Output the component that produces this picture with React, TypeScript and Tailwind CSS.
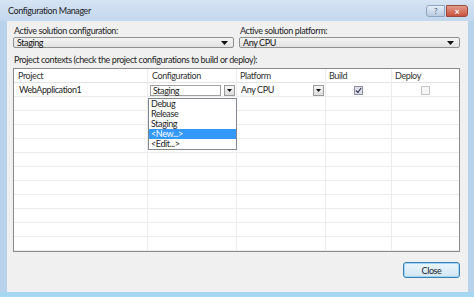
import React from "react";

const font = { fontFamily: 'Lato, "Open Sans", "DejaVu Sans", sans-serif' };

function Arrow() {
  return (
    <svg width="7" height="4" viewBox="0 0 7 4">
      <path d="M0 0h7L3.5 4z" fill="#111" />
    </svg>
  );
}

function Combo({ value }: { value: string }) {
  return (
    <div className="flex h-[15px] flex-1 items-center justify-between rounded-[2px] border border-[#8e8f8f] bg-gradient-to-b from-[#f4f4f4] to-[#e2e2e2] pl-[3px] pr-[5px]">
      <span className="text-[9px] leading-none text-[#111]">{value}</span>
      <Arrow />
    </div>
  );
}

function SmallDrop() {
  return (
    <div className="flex h-[11px] w-[11px] items-center justify-center border border-[#9a9a9a] bg-gradient-to-b from-[#f6f6f6] to-[#dcdcdc]">
      <svg width="5" height="3" viewBox="0 0 5 3">
        <path d="M0 0h5L2.5 3z" fill="#111" />
      </svg>
    </div>
  );
}

const cols = "grid grid-cols-[134px_89px_89px_66px_67px]";
const cell = "border-r border-[#ececec] last:border-r-0";

export default function App() {
  const rows = Array.from({ length: 11 });
  return (
    <div
      style={font}
      className="relative flex h-[297px] w-[474px] flex-col overflow-hidden bg-[#b9d2ec] tracking-[-0.4px] text-[#1e1e1e]"
    >
      {/* title bar */}
      <div className="flex h-[21px] items-center justify-between bg-gradient-to-b from-[#d6e4f3] to-[#c3d7ee] pl-[8px] pr-[6px]">
        <span className="text-[9px] text-[#1c1c1c]">Configuration Manager</span>
        <div className="flex gap-[1px] self-start pt-[5px]">
          <div className="flex h-[12px] w-[19px] items-center justify-center rounded-l-[3px] border border-[#8ea5c2] bg-gradient-to-b from-[#e6eef8] to-[#b9cbe2] text-[8px] leading-none text-[#4b5f7a]">
            ?
          </div>
          <div className="flex h-[12px] w-[22px] items-center justify-center rounded-r-[3px] border border-[#9b4a3e] bg-gradient-to-b from-[#e49a8a] to-[#c8503c] text-[9px] font-bold leading-none text-white">
            ×
          </div>
        </div>
      </div>

      {/* client area */}
      <div className="ml-[7px] mr-[6px] flex flex-1 flex-col bg-[#f0f0f0] pl-[6px] pr-[8px]">
        <div className="mt-[4px] flex gap-[5px]">
          <div className="flex flex-1 flex-col">
            <span className="h-[12px] pl-[1px] text-[9px] leading-[12px]">Active solution configuration:</span>
            <Combo value="Staging" />
          </div>
          <div className="flex flex-1 flex-col">
            <span className="h-[12px] pl-[1px] text-[9px] leading-[12px]">Active solution platform:</span>
            <Combo value="Any CPU" />
          </div>
        </div>

        <span className="mt-[6px] h-[12px] pl-[1px] text-[9px] leading-[12px]">
          Project contexts (check the project configurations to build or deploy):
        </span>

        <div className="relative mt-[2px] h-[184px] border border-[#8b8b8b] bg-white">
          <div className={`${cols} h-[14px] border-b border-[#e3e3e3] text-[9px] leading-[14px] text-[#333]`}>
            <div className={`${cell} pl-[4px]`}>Project</div>
            <div className={`${cell} pl-[4px]`}>Configuration</div>
            <div className={`${cell} pl-[3px]`}>Platform</div>
            <div className={`${cell} pl-[3px]`}>Build</div>
            <div className={`${cell} pl-[3px]`}>Deploy</div>
          </div>
          <div className={`${cols} h-[14px] border-b border-[#ececec] text-[9px] leading-[14px]`}>
            <div className={`${cell} pl-[5px]`}>WebApplication1</div>
            <div className={`${cell} flex items-center gap-[3px] pl-[2px]`}>
              <div className="flex h-[11px] w-[71px] items-center border border-[#a0a0a0] pl-[2px] text-[9px] leading-none">
                Staging
              </div>
              <SmallDrop />
            </div>
            <div className={`${cell} flex items-center justify-between pl-[4px] pr-[1px]`}>
              <span>Any CPU</span>
              <SmallDrop />
            </div>
            <div className={`${cell} flex items-center justify-center`}>
              <div className="ml-[-1px] flex h-[9px] w-[9px] items-center justify-center border border-[#8f8f9f] bg-[#dfe1ea]">
                <svg width="7" height="7" viewBox="0 0 7 7">
                  <path d="M1 3.5L3 5.5L6 1" fill="none" stroke="#3b3b5a" strokeWidth="1.2" />
                </svg>
              </div>
            </div>
            <div className={`${cell} flex items-center justify-center`}>
              <div className="h-[9px] w-[9px] border border-[#c4c4c4] bg-[#f7f7f7]" />
            </div>
          </div>
          {rows.map((_, i) => (
            <div key={i} className={`${cols} h-[14px] border-b border-[#ececec] last:border-b-0`}>
              <div className={cell} />
              <div className={cell} />
              <div className={cell} />
              <div className={cell} />
              <div className={cell} />
            </div>
          ))}

          {/* open dropdown list */}
          <div className="absolute left-[134px] top-[29px] w-[89px] border border-[#828790] bg-white text-[9px] leading-[10px]">
            <div className="pl-[2px]">Debug</div>
            <div className="pl-[2px]">Release</div>
            <div className="pl-[2px]">Staging</div>
            <div className="bg-[#3399ff] pl-[2px] text-white">&lt;New...&gt;</div>
            <div className="pl-[2px]">&lt;Edit...&gt;</div>
          </div>
        </div>

        <div className="mt-[10px] flex justify-end">
          <div className="flex h-[16px] w-[57px] items-center justify-center rounded-[3px] border border-[#3c7fb1] bg-gradient-to-b from-[#eaf6fd] to-[#d2e6f3] text-[9px] leading-none shadow-[inset_0_0_0_1px_#9fd5f5]">
            Close
          </div>
        </div>
      </div>
      <div className="h-[5px] bg-[#a5d6f2]" />
    </div>
  );
}
